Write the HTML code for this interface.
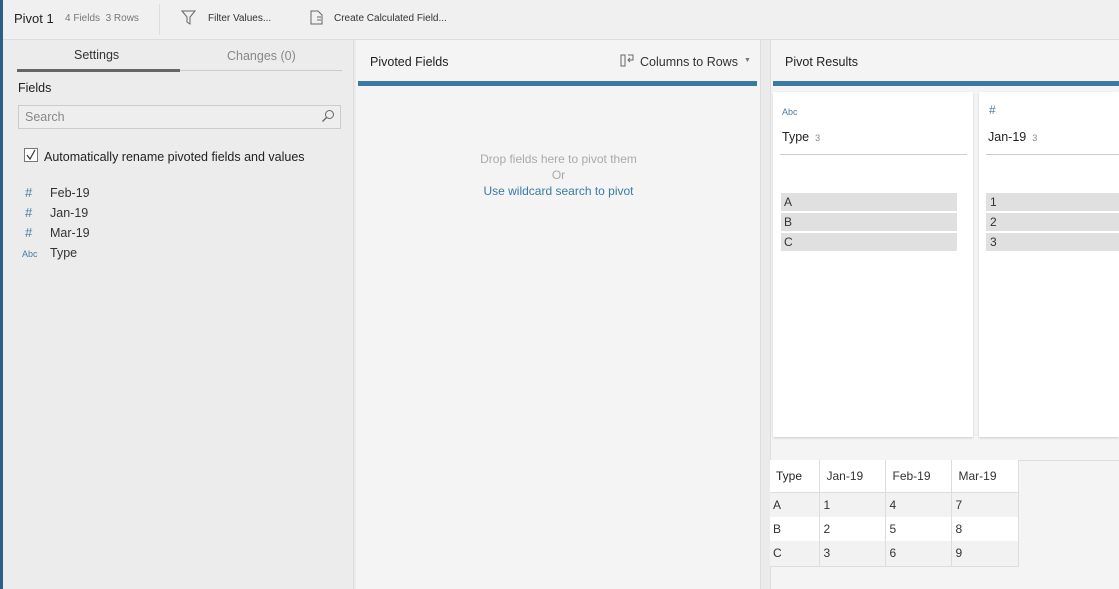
<!DOCTYPE html>
<html><head><style>
*{margin:0;padding:0;box-sizing:border-box}
body{width:1119px;height:589px;overflow:hidden;background:#ebebeb;font-family:"Liberation Sans",sans-serif;font-size:12px;color:#333;position:relative}
.a{position:absolute}
</style></head><body>
<div class="a" style="left:0;top:0;width:1119px;height:40px;background:#f0f0f0;border-bottom:1px solid #ddd"></div>
<div class="a" style="left:14px;top:11px;font-size:13px;color:#222">Pivot 1</div>
<div class="a" style="left:65px;top:13px;font-size:10px;color:#777">4 Fields&nbsp; 3 Rows</div>
<div class="a" style="left:159px;top:4px;width:1px;height:31px;background:#ddd"></div>
<svg class="a" style="left:181px;top:10px" width="15" height="15"><path d="M1 1H14L9 7V14L6 12V7Z" fill="none" stroke="#666"/></svg>
<div class="a" style="left:208px;top:13px;font-size:10px;color:#333">Filter Values...</div>
<svg class="a" style="left:310px;top:10px" width="14" height="15"><path d="M1 1H8L12 5V14H1Z M7 7H11 M7 10H11" fill="none" stroke="#666"/></svg>
<div class="a" style="left:334px;top:13px;font-size:10px;color:#333">Create Calculated Field...</div>
<div class="a" style="left:0;top:0;width:3px;height:589px;background:#2f5d8a"></div>
<div class="a" style="left:3px;top:40px;width:351px;height:549px;background:#ececec;border-right:1px solid #ddd"></div>
<div class="a" style="left:74px;top:48px;font-size:12.5px;color:#333">Settings</div>
<div class="a" style="left:227px;top:49px;font-size:12.5px;color:#888">Changes (0)</div>
<div class="a" style="left:17px;top:69px;width:163px;height:3px;background:#666"></div>
<div class="a" style="left:180px;top:70px;width:162px;height:1px;background:#ccc"></div>
<div class="a" style="left:18px;top:81px;font-size:12.5px;color:#222">Fields</div>
<div class="a" style="left:18px;top:105px;width:323px;height:24px;border:1px solid #ccc;background:#eee"></div>
<div class="a" style="left:25px;top:110px;font-size:12.5px;color:#888">Search</div>
<svg class="a" style="left:321px;top:109px" width="14" height="14"><circle cx="8.5" cy="5.5" r="4" fill="none" stroke="#666"/><path d="M5.5 8.5L1.5 12.5" stroke="#666" stroke-width="1.3"/></svg>
<div class="a" style="left:24px;top:148px;width:14px;height:14px;border:1px solid #777;background:#fff"></div>
<svg class="a" style="left:25px;top:149px" width="12" height="12"><path d="M2 6L5 10L10 1" fill="none" stroke="#333" stroke-width="1.2"/></svg>
<div class="a" style="left:44px;top:150px;font-size:12.5px;color:#222">Automatically rename pivoted fields and values</div>
<div class="a" style="left:25px;top:185px;color:#4a7ba0;font-size:13px">#</div><div class="a" style="left:50px;top:186px;font-size:12.5px">Feb-19</div>
<div class="a" style="left:25px;top:205px;color:#4a7ba0;font-size:13px">#</div><div class="a" style="left:50px;top:206px;font-size:12.5px">Jan-19</div>
<div class="a" style="left:25px;top:225px;color:#4a7ba0;font-size:13px">#</div><div class="a" style="left:50px;top:226px;font-size:12.5px">Mar-19</div>
<div class="a" style="left:22px;top:249px;color:#4a7ba0;font-size:9px">Abc</div><div class="a" style="left:50px;top:246px;font-size:12.5px">Type</div>
<div class="a" style="left:356px;top:40px;width:405px;height:549px;background:#f4f4f4;border-right:1px solid #ddd"></div>
<div class="a" style="left:370px;top:55px;font-size:12.5px;color:#222">Pivoted Fields</div>
<svg class="a" style="left:620px;top:54px" width="15" height="13"><rect x="1" y="1" width="4" height="11" fill="none" stroke="#666"/><path d="M8 1H13V6H9 M10 4L8 6L10 8" fill="none" stroke="#666"/></svg>
<div class="a" style="left:640px;top:55px;font-size:12.5px;color:#333">Columns to Rows</div>
<div class="a" style="left:744px;top:57px;font-size:7px;color:#777">▼</div>
<div class="a" style="left:358px;top:81px;width:399px;height:5px;background:#3a7aa3"></div>
<div class="a" style="left:356px;top:151px;width:405px;text-align:center;font-size:12px;color:#aaa;line-height:16px">Drop fields here to pivot them<br>Or<br><span style="color:#3a7aa3">Use wildcard search to pivot</span></div>
<div class="a" style="left:770px;top:40px;width:349px;height:549px;background:#f4f4f4;border-left:1px solid #ddd"></div>
<div class="a" style="left:785px;top:55px;font-size:12.5px;color:#222">Pivot Results</div>
<div class="a" style="left:773px;top:81px;width:346px;height:5px;background:#3a7aa3"></div>
<div class="a" style="left:773px;top:92px;width:200px;height:345px;background:#fff;box-shadow:0 1px 2px #ccc"></div>
<div class="a" style="left:979px;top:92px;width:140px;height:345px;background:#fff;box-shadow:0 1px 2px #ccc"></div>
<div class="a" style="left:782px;top:107px;font-size:9px;color:#4a7ba0">Abc</div>
<div class="a" style="left:782px;top:130px;font-size:12.5px;color:#222">Type <span style="font-size:9px;color:#888">&nbsp;3</span></div>
<div class="a" style="left:780px;top:154px;width:187px;height:1px;background:#ccc"></div>
<div class="a" style="left:989px;top:103px;font-size:12px;color:#4a7ba0">#</div>
<div class="a" style="left:988px;top:130px;font-size:12.5px;color:#222">Jan-19 <span style="font-size:9px;color:#888">&nbsp;3</span></div>
<div class="a" style="left:986px;top:154px;width:133px;height:1px;background:#ccc"></div>
<div class="a" style="left:781px;top:193px;width:176px;height:18px;background:#e0e0e0;padding:2px 3px">A</div>
<div class="a" style="left:781px;top:213px;width:176px;height:18px;background:#e0e0e0;padding:2px 3px">B</div>
<div class="a" style="left:781px;top:233px;width:176px;height:18px;background:#e0e0e0;padding:2px 3px">C</div>
<div class="a" style="left:986px;top:193px;width:133px;height:18px;background:#e0e0e0;padding:2px 4px">1</div>
<div class="a" style="left:986px;top:213px;width:133px;height:18px;background:#e0e0e0;padding:2px 4px">2</div>
<div class="a" style="left:986px;top:233px;width:133px;height:18px;background:#e0e0e0;padding:2px 4px">3</div>
<div class="a" style="left:770px;top:460px;width:349px;height:1px;background:#ddd"></div>
<table class="a" style="left:770px;top:460px;border-collapse:collapse;font-size:12px">
<tr style="background:#fff;height:32px"><th style="width:49px;text-align:left;padding-left:6px;font-weight:normal;color:#222;border-right:1px solid #ddd">Type</th><th style="width:66px;text-align:left;padding-left:7px;font-weight:normal;border-right:1px solid #ddd">Jan-19</th><th style="width:66px;text-align:left;padding-left:7px;font-weight:normal;border-right:1px solid #ddd">Feb-19</th><th style="width:67px;text-align:left;padding-left:7px;font-weight:normal;border-right:1px solid #ddd">Mar-19</th></tr>
<tr style="background:#f2f2f2;height:25px;border-top:1px solid #ddd"><td style="padding-left:3px;border-right:1px solid #ddd">A</td><td style="padding-left:4px;border-right:1px solid #ddd">1</td><td style="padding-left:4px;border-right:1px solid #ddd">4</td><td style="padding-left:4px;border-right:1px solid #ddd">7</td></tr>
<tr style="background:#fff;height:24px"><td style="padding-left:3px;border-right:1px solid #ddd">B</td><td style="padding-left:4px;border-right:1px solid #ddd">2</td><td style="padding-left:4px;border-right:1px solid #ddd">5</td><td style="padding-left:4px;border-right:1px solid #ddd">8</td></tr>
<tr style="background:#f2f2f2;height:25px;border-bottom:1px solid #ddd"><td style="padding-left:3px;border-right:1px solid #ddd">C</td><td style="padding-left:4px;border-right:1px solid #ddd">3</td><td style="padding-left:4px;border-right:1px solid #ddd">6</td><td style="padding-left:4px;border-right:1px solid #ddd">9</td></tr>
</table>
</body></html>
